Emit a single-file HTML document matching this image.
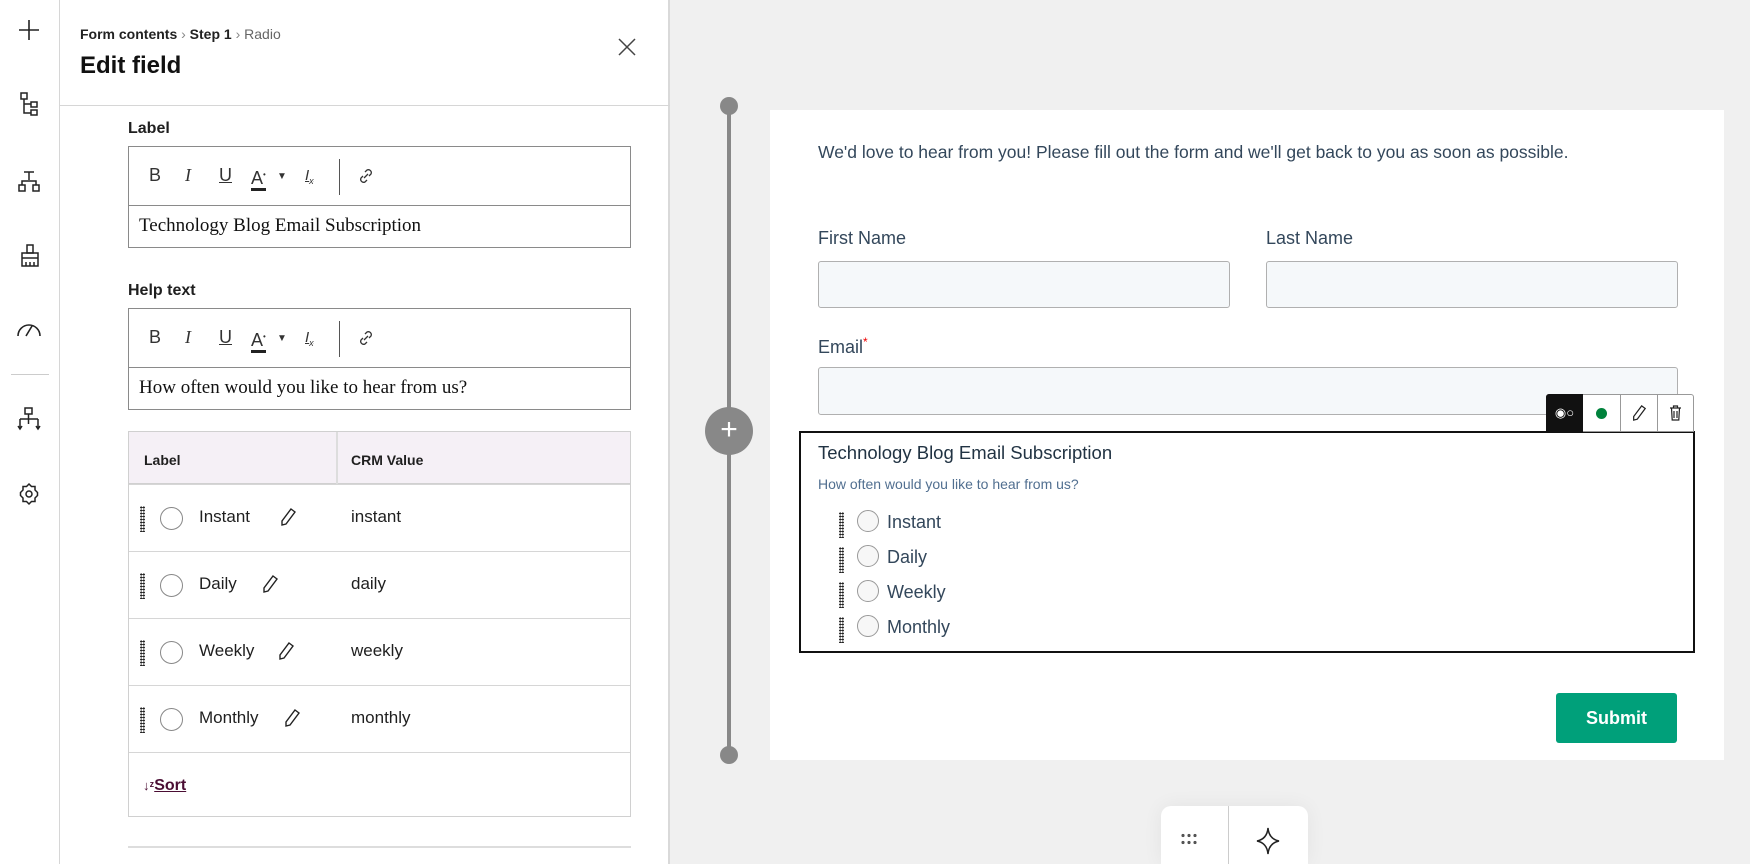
<!DOCTYPE html>
<html style="overflow:hidden;height:864px"><head><meta charset="utf-8"><style>
*{box-sizing:border-box;margin:0;padding:0}
body{width:1750px;height:864px;overflow:hidden;background:#f0f0f0;font-family:"Liberation Sans",sans-serif;position:relative;color:#1f1f1f}
.abs{position:absolute}
.rail{left:0;top:0;width:60px;height:864px;background:#fff;border-right:1px solid #d6d6d6}
.panel{left:60px;top:0;width:610px;height:864px;background:#fff;border-right:2px solid #d9d9d9}
.rte{left:128px;width:503px;border:1px solid #8a8a8a;background:#fff}
.tb{height:59px;border-bottom:1px solid #8a8a8a;position:relative}
.tb span{position:absolute;top:18px;font-size:18px;color:#333}
.rte .txt{font-family:"Liberation Serif",serif;font-size:19px;padding:9px 10px;color:#111}
.lbl{font-weight:bold;font-size:16px;left:128px}
.row{position:absolute;left:0;width:100%;height:67px;border-top:1px solid #d6d6d6}
.row .drag{position:absolute;left:11px;top:21px;width:5px;height:26px;background-image:radial-gradient(circle,#222 1px,transparent 1.2px);background-size:2.5px 3px}
.row .rad{position:absolute;left:31px;top:22px;width:23px;height:23px;border:1.5px solid #888;border-radius:50%}
.row .t{position:absolute;left:70px;top:22px;font-size:17px}
.row .v{position:absolute;left:222px;top:22px;font-size:17px}
.row svg{position:absolute;top:22px}
.inp{background:#f5f8fa;border:1px solid #b0b0b0;border-radius:3px}
.fl{font-size:18px;color:#33475b}
.opt{position:absolute;left:835px;font-size:18px;color:#33475b}
.opt .d{position:absolute;left:4px;top:2px;width:5px;height:26px;background-image:radial-gradient(circle,#222 1px,transparent 1.2px);background-size:2.5px 3px}
.opt .c{position:absolute;left:22px;top:0;width:22px;height:22px;border:1.5px solid #999;border-radius:50%;background:#f7f7f7}
.opt .t{position:absolute;left:52px;top:2px;white-space:nowrap}
</style></head><body>
<div class="abs rail">
<svg class="abs" style="left:17px;top:18px" width="24" height="24" viewBox="0 0 24 24" fill="none" stroke="#222" stroke-width="1.6"><path d="M12 2v20M2 12h20"/></svg>
<svg class="abs" style="left:19px;top:92px" width="22" height="26" viewBox="0 0 22 26" fill="none" stroke="#222" stroke-width="1.5"><rect x="2" y="1" width="6" height="6"/><rect x="12" y="10" width="6" height="5"/><rect x="12" y="18" width="6" height="5"/><path d="M5 7v14h7M5 12h7"/></svg>
<svg class="abs" style="left:17px;top:169px" width="24" height="24" viewBox="0 0 24 24" fill="none" stroke="#222" stroke-width="1.5"><path d="M7 3h10M12 3v8M5 16v-4h14v4"/><rect x="2" y="16" width="6" height="6"/><rect x="16" y="16" width="6" height="6"/></svg>
<svg class="abs" style="left:18px;top:243px" width="24" height="26" viewBox="0 0 24 26" fill="none" stroke="#222" stroke-width="1.5"><rect x="9" y="2" width="6" height="8"/><path d="M4 10h16v5H4zM4 15v8h16v-8M8 19v4M12 19v4M16 19v4"/></svg>
<svg class="abs" style="left:16px;top:320px" width="26" height="18" viewBox="0 0 26 18" fill="none" stroke="#222" stroke-width="1.6"><path d="M2 16a11 11 0 0 1 22 0M10 16l6-10"/></svg>
<div class="abs" style="left:11px;top:374px;width:38px;height:1px;background:#ccc"></div>
<svg class="abs" style="left:17px;top:406px" width="24" height="26" viewBox="0 0 24 26" fill="none" stroke="#222" stroke-width="1.5"><rect x="8" y="2" width="7" height="6"/><path d="M11.5 8v5M3 13h18M3 13v10M21 13v10M1 20l2 3 2-3M19 20l2 3 2-3M11.5 13v5"/></svg>
<svg class="abs" style="left:17px;top:482px" width="24" height="24" viewBox="0 0 24 24" fill="none" stroke="#222" stroke-width="1.5"><path d="M12 2l2.5 2.5h3.5v3.5L20.5 10.5v3L18 16v3.5h-3.5L12 22l-2.5-2.5H6V16L3.5 13.5v-3L6 8V4.5h3.5z"/><circle cx="12" cy="12" r="3"/></svg>
</div>
<div class="abs panel">
<div class="abs" style="left:20px;top:26px;font-size:14px;font-weight:bold;color:#222">Form contents <span style="color:#888;font-weight:normal">›</span> Step 1 <span style="color:#888;font-weight:normal">›</span> <span style="font-weight:normal;color:#666">Radio</span></div>
<div class="abs" style="left:20px;top:52px;font-size:24px;font-weight:bold;color:#111">Edit field</div>
<svg class="abs" style="left:558px;top:38px" width="18" height="18" viewBox="0 0 18 18" stroke="#444" stroke-width="1.5"><path d="M1 1l16 16M17 1L1 17"/></svg>
<div class="abs" style="left:0;top:105px;width:610px;height:1px;background:#d6d6d6"></div>
</div>
<div class="abs lbl" style="top:120px">Label</div>
<div class="abs rte" style="top:146px;height:102px"><div class="tb"><span style="left:20px">B</span><span style="left:56px;font-style:italic;font-family:'Liberation Serif'">I</span><span style="left:90px;text-decoration:underline">U</span><span style="left:122px;border-bottom:3px solid #222;line-height:20px">A<sup style="font-size:8px">•</sup></span><span style="left:148px;font-size:10px;top:24px">▼</span><span style="left:176px;font-style:italic;font-size:15px;top:20px;text-decoration:underline">I<sub style="font-size:9px">x</sub></span><span style="left:210px;top:12px;width:1px;height:36px;background:#555"></span><svg class="abs" style="left:229px;top:21px" width="16" height="16" viewBox="0 0 16 16" fill="none" stroke="#333" stroke-width="1.3"><path d="M7 4l2-2a3 3 0 0 1 4 4l-2 2M9 12l-2 2a3 3 0 0 1-4-4l2-2M6 10l4-4"/></svg></div><div class="txt">Technology Blog Email Subscription</div></div>
<div class="abs lbl" style="top:282px">Help text</div>
<div class="abs rte" style="top:308px;height:102px"><div class="tb"><span style="left:20px">B</span><span style="left:56px;font-style:italic;font-family:'Liberation Serif'">I</span><span style="left:90px;text-decoration:underline">U</span><span style="left:122px;border-bottom:3px solid #222;line-height:20px">A<sup style="font-size:8px">•</sup></span><span style="left:148px;font-size:10px;top:24px">▼</span><span style="left:176px;font-style:italic;font-size:15px;top:20px;text-decoration:underline">I<sub style="font-size:9px">x</sub></span><span style="left:210px;top:12px;width:1px;height:36px;background:#555"></span><svg class="abs" style="left:229px;top:21px" width="16" height="16" viewBox="0 0 16 16" fill="none" stroke="#333" stroke-width="1.3"><path d="M7 4l2-2a3 3 0 0 1 4 4l-2 2M9 12l-2 2a3 3 0 0 1-4-4l2-2M6 10l4-4"/></svg></div><div class="txt">How often would you like to hear from us?</div></div>
<div class="abs" style="left:128px;top:431px;width:503px;height:386px;border:1px solid #d0d0d0;background:#fff">
<div class="abs" style="left:0;top:0;width:100%;height:52px;background:#f5f0f6;border-bottom:1px solid #d0d0d0"></div>
<div class="abs" style="left:207px;top:0;width:2px;height:52px;background:#ddd"></div>
<div class="abs" style="left:15px;top:20px;font-size:14px;font-weight:bold">Label</div>
<div class="abs" style="left:222px;top:20px;font-size:14px;font-weight:bold">CRM Value</div>
<div class="row" style="top:52px"><div class="drag"></div><div class="rad"></div><div class="t">Instant</div><svg style="left:150px" width="18" height="20" viewBox="0 0 18 20" fill="none" stroke="#222" stroke-width="1.4"><path d="M12 2l4 3-9 12-4 1 0-4z"/></svg><div class="v">instant</div></div>
<div class="row" style="top:119px"><div class="drag"></div><div class="rad"></div><div class="t">Daily</div><svg style="left:132px" width="18" height="20" viewBox="0 0 18 20" fill="none" stroke="#222" stroke-width="1.4"><path d="M12 2l4 3-9 12-4 1 0-4z"/></svg><div class="v">daily</div></div>
<div class="row" style="top:186px"><div class="drag"></div><div class="rad"></div><div class="t">Weekly</div><svg style="left:148px" width="18" height="20" viewBox="0 0 18 20" fill="none" stroke="#222" stroke-width="1.4"><path d="M12 2l4 3-9 12-4 1 0-4z"/></svg><div class="v">weekly</div></div>
<div class="row" style="top:253px"><div class="drag"></div><div class="rad"></div><div class="t">Monthly</div><svg style="left:154px" width="18" height="20" viewBox="0 0 18 20" fill="none" stroke="#222" stroke-width="1.4"><path d="M12 2l4 3-9 12-4 1 0-4z"/></svg><div class="v">monthly</div></div>
<div class="row" style="top:320px;height:66px"><div class="abs" style="left:14px;top:24px;font-size:16px;font-weight:bold;color:#4a0d33"><span style="font-size:13px">↓ᶻ</span><u>Sort</u></div></div>
</div>
<div class="abs" style="left:128px;top:846px;width:503px;height:2px;background:#ddd"></div>

<div class="abs" style="left:727px;top:106px;width:4px;height:650px;background:#888"></div>
<div class="abs" style="left:720px;top:97px;width:18px;height:18px;border-radius:50%;background:#888"></div>
<div class="abs" style="left:720px;top:746px;width:18px;height:18px;border-radius:50%;background:#888"></div>
<div class="abs" style="left:705px;top:407px;width:48px;height:48px;border-radius:50%;background:#888;color:#fff;font-size:30px;text-align:center;line-height:46px;font-weight:300">+</div>

<div class="abs" style="left:770px;top:110px;width:954px;height:650px;background:#fff">
<div class="abs fl" style="left:48px;top:32px;font-size:17.5px">We'd love to hear from you! Please fill out the form and we'll get back to you as soon as possible.</div>
<div class="abs fl" style="left:48px;top:118px">First Name</div>
<div class="abs fl" style="left:496px;top:118px">Last Name</div>
<div class="abs inp" style="left:48px;top:151px;width:412px;height:47px"></div>
<div class="abs inp" style="left:496px;top:151px;width:412px;height:47px"></div>
<div class="abs fl" style="left:48px;top:225px">Email<sup style="color:#e00;font-size:12px">*</sup></div>
<div class="abs inp" style="left:48px;top:257px;width:860px;height:48px"></div>
<div class="abs" style="left:29px;top:321px;width:896px;height:222px;border:2px solid #111;background:#fff"></div>
<div class="abs fl" style="left:48px;top:332px;font-size:18.5px;color:#213343">Technology Blog Email Subscription</div>
<div class="abs fl" style="left:48px;top:366px;font-size:14px;color:#516f90">How often would you like to hear from us?</div>
<div class="abs" style="left:776px;top:284px;width:148px;height:38px;border:1px solid #999;background:#fff;border-radius:3px 3px 0 0"></div>
<div class="abs" style="left:776px;top:284px;width:37px;height:38px;background:#111;color:#fff;font-size:13px;text-align:center;line-height:38px;border-radius:3px 0 0 0">◉○</div>
<div class="abs" style="left:850px;top:284px;width:1px;height:38px;background:#999"></div>
<div class="abs" style="left:887px;top:284px;width:1px;height:38px;background:#999"></div>
<div class="abs" style="left:826px;top:298px;width:11px;height:11px;border-radius:50%;background:#00823c"></div>
<svg class="abs" style="left:861px;top:294px" width="16" height="18" viewBox="0 0 18 20" fill="none" stroke="#222" stroke-width="1.4"><path d="M12 2l4 3-9 12-4 1 0-4z"/></svg>
<svg class="abs" style="left:899px;top:295px" width="13" height="16" viewBox="0 0 13 16" fill="none" stroke="#222" stroke-width="1.2"><path d="M1 3h11M4.5 3V1h4v2M2.5 3l.7 12h6.6l.7-12M5 6v7M8 6v7"/></svg>
<div class="abs" style="left:786px;top:583px;width:121px;height:50px;background:#00a07a;border-radius:3px;color:#fff;font-weight:bold;font-size:18px;text-align:center;line-height:50px">Submit</div>
</div>
<div class="opt" style="top:510px"><div class="d"></div><div class="c"></div><div class="t">Instant</div></div>
<div class="opt" style="top:545px"><div class="d"></div><div class="c"></div><div class="t">Daily</div></div>
<div class="opt" style="top:580px"><div class="d"></div><div class="c"></div><div class="t">Weekly</div></div>
<div class="opt" style="top:615px"><div class="d"></div><div class="c"></div><div class="t">Monthly</div></div>

<div class="abs" style="left:1161px;top:806px;width:147px;height:58px;background:#fff;border-radius:10px 10px 0 0;box-shadow:0 0 20px rgba(0,0,0,0.06)"></div>
<div class="abs" style="left:1228px;top:806px;width:1px;height:58px;background:#ccc"></div>
<div class="abs" style="left:1180px;top:832px;width:18px;height:14px;background-image:radial-gradient(circle,#555 1.5px,transparent 1.8px);background-size:6px 7px"></div>
<svg class="abs" style="left:1255px;top:826px" width="26" height="30" viewBox="0 0 26 30" fill="none" stroke="#222" stroke-width="1.5"><path d="M13 2Q14 13 24 15Q14 17 13 28Q12 17 2 15Q12 13 13 2z"/></svg>
</body></html>
